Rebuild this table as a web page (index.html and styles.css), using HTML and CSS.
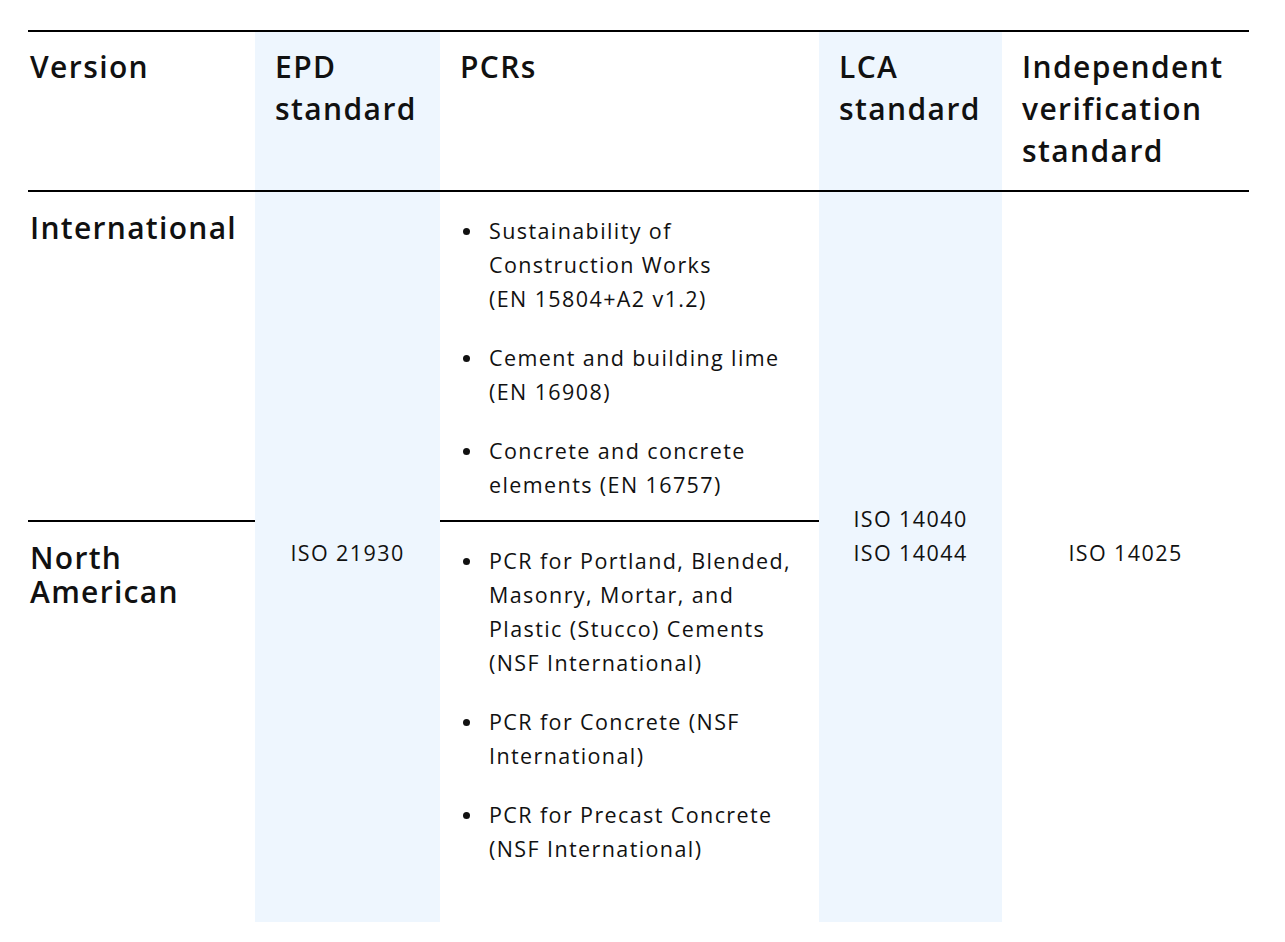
FILE: index.html
```html
<!DOCTYPE html>
<html lang="en">
<head>
<meta charset="utf-8">
<title>EPD standards</title>
<link rel="stylesheet" href="styles.css">
</head>
<body>
<div class="wrap">
<table class="std">
  <colgroup>
    <col class="c1"><col class="c2"><col class="c3"><col class="c4"><col class="c5">
  </colgroup>
  <thead>
    <tr>
      <th class="first">Version</th>
      <th class="hl">EPD<br>standard</th>
      <th>PCRs</th>
      <th class="hl">LCA<br>standard</th>
      <th>Independent verification standard</th>
    </tr>
  </thead>
  <tbody>
    <tr class="r1">
      <th class="first label">International</th>
      <td rowspan="2" class="hl mid">ISO 21930</td>
      <td class="pcr">
        <ul>
          <li>Sustainability of<br>Construction Works<br>(EN 15804+A2 v1.2)</li>
          <li>Cement and building lime<br>(EN 16908)</li>
          <li>Concrete and concrete<br>elements (EN 16757)</li>
        </ul>
      </td>
      <td rowspan="2" class="hl mid lca">ISO 14040<br>ISO 14044</td>
      <td rowspan="2" class="mid">ISO 14025</td>
    </tr>
    <tr class="r2">
      <th class="first label">North<br>American</th>
      <td class="pcr">
        <ul>
          <li>PCR for Portland, Blended,<br>Masonry, Mortar, and<br>Plastic (Stucco) Cements<br>(NSF International)</li>
          <li>PCR for Concrete (NSF<br>International)</li>
          <li>PCR for Precast Concrete<br>(NSF International)</li>
        </ul>
      </td>
    </tr>
  </tbody>
</table>
</div>
</body>
</html>
```

FILE: styles.css
```css
html, body {
  margin: 0;
  padding: 0;
  background: #fff;
}
body {
  font-family: "Open Sans", Lato, sans-serif;
  color: #111;
}
.wrap {
  padding: 30px 36px 0 28px;
}
.std {
  width: 1221px;
  border-collapse: collapse;
  table-layout: fixed;
  border-top: 2px solid #000;
}
.c1 { width: 227px; }
.c2 { width: 185px; }
.c3 { width: 379px; }
.c4 { width: 183px; }
.c5 { width: 247px; }

.std thead th {
  text-align: left;
  vertical-align: top;
  font-weight: 600;
  font-size: 30px;
  line-height: 42px;
  letter-spacing: 1.4px;
  padding: 14px 6px 18px 20px;
  border-bottom: 2px solid #000;
}
.std th.first {
  padding-left: 2px;
}
.hl {
  background: #eef6fe;
}
.std tbody th.label {
  text-align: left;
  vertical-align: top;
  font-weight: 600;
  font-size: 30px;
  line-height: 34px;
  letter-spacing: 1.3px;
  padding: 19px 10px 0 2px;
}
.std td {
  font-size: 21.5px;
  line-height: 34px;
  letter-spacing: 1.4px;
  padding: 0 6px 8px;
}
.std td.mid {
  text-align: center;
  vertical-align: middle;
}
.std td.lca {
  padding-bottom: 42px;
}
.r2 th.label, .r2 td.pcr {
  border-top: 2px solid #000;
}
.std td.pcr {
  vertical-align: top;
  padding: 22px 4px 18px 21px;
}
.r2 td.pcr {
  padding-bottom: 56px;
}
.pcr ul {
  list-style: none;
  margin: 0;
  padding: 0;
}
.pcr li {
  position: relative;
  padding-left: 28px;
  margin-bottom: 25px;
}
.pcr li:last-child {
  margin-bottom: 0;
}
.pcr li::before {
  content: "";
  position: absolute;
  left: 2px;
  top: 14px;
  width: 7px;
  height: 7px;
  border-radius: 50%;
  background: #111;
}
```
